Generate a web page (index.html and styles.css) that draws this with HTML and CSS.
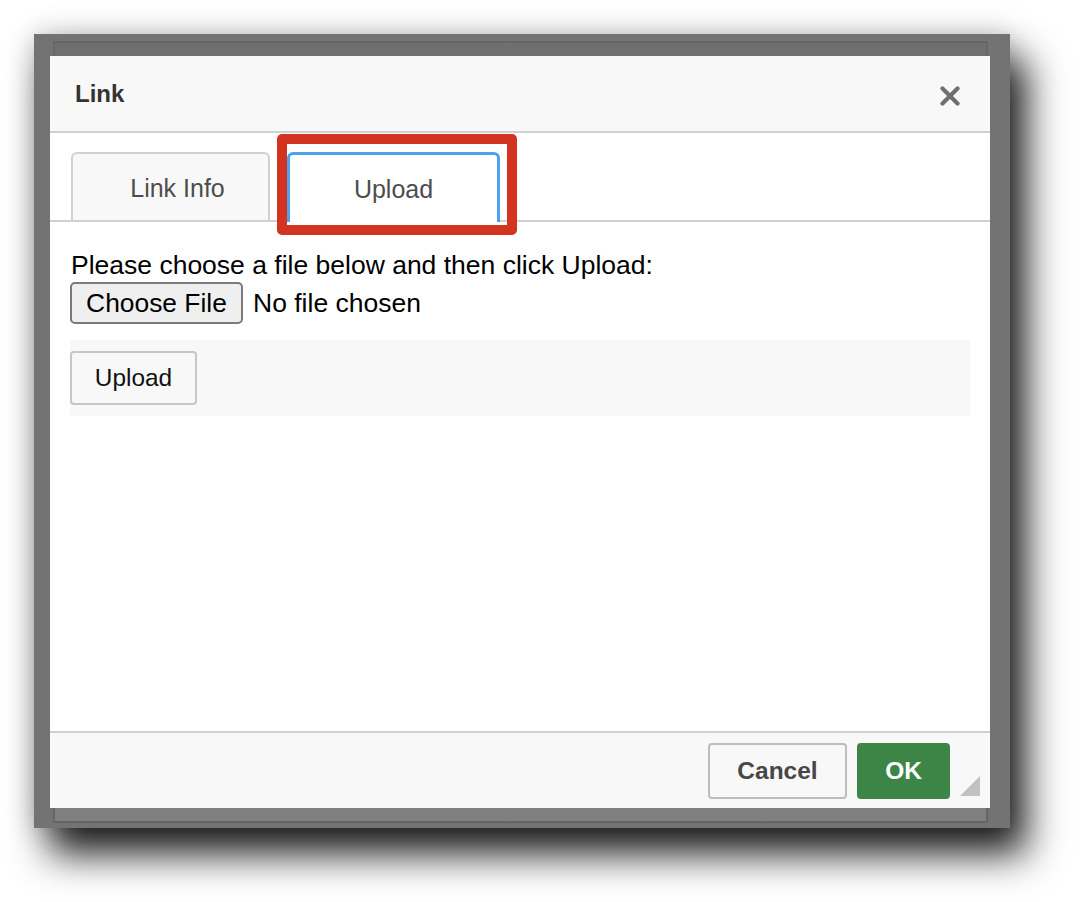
FILE: index.html
```html
<!DOCTYPE html>
<html lang="en">
<head>
<meta charset="utf-8">
<title>Link</title>
<link rel="stylesheet" href="styles.css">
</head>
<body>
<div class="stage">
  <div class="frame">
    <div class="dialog">
      <div class="header">
        <div class="title">Link</div>
        <svg class="close" width="20" height="20" viewBox="0 0 20 20" aria-label="Close">
          <path d="M2.5 2.5 L17.5 17.5 M17.5 2.5 L2.5 17.5" stroke="#6f6f6f" stroke-width="4.2" stroke-linecap="round" fill="none"/>
        </svg>
      </div>
      <div class="body">
        <div class="tabs">
          <div class="tab tab-info">Link Info</div>
          <div class="tab tab-upload active">Upload</div>
        </div>
        <div class="content">
          <div class="prompt">Please choose a file below and then click Upload:</div>
          <div class="file-row">
            <span class="file-btn">Choose File</span>
            <span class="file-name">No file chosen</span>
          </div>
          <div class="panel">
            <span class="upload-btn">Upload</span>
          </div>
        </div>
      </div>
      <div class="footer">
        <span class="btn btn-cancel">Cancel</span>
        <span class="btn btn-ok">OK</span>
        <span class="resize"></span>
      </div>
      <div class="highlight"></div>
    </div>
  </div>
</div>
</body>
</html>
```

FILE: styles.css
```css
html, body {
  margin: 0;
  padding: 0;
  background: #ffffff;
}

body {
  font-family: "Liberation Sans", Arial, sans-serif;
  overflow: hidden;
}

.stage {
  box-sizing: border-box;
  padding: 34px;
  width: 1044px;
  height: 902px;
}

.frame {
  position: relative;
  width: 940px;
  padding: 22px 20px 20px 16px;
  background: #737373;
  box-shadow: 16px 26px 36px rgba(0, 0, 0, 0.88), 0 0 26px rgba(0, 0, 0, 0.22);
}

.frame::before {
  content: "";
  position: absolute;
  left: 19px;
  top: 7px;
  right: 22px;
  bottom: 5px;
  border: 2px solid #666666;
  background: linear-gradient(#6f6f6f, #808080);
}

.dialog {
  position: relative;
  z-index: 1;
  width: 940px;
  height: 752px;
  background: #ffffff;
  display: flex;
  flex-direction: column;
}

.header {
  height: 75px;
  border-bottom: 2px solid #d1d1d1;
  background: #f8f8f8;
  display: flex;
  align-items: center;
  justify-content: space-between;
  padding: 0 30px 0 25px;
}

.title {
  font-size: 24px;
  font-weight: bold;
  color: #333333;
  padding-top: 1px;
}

.close {
  display: block;
  margin-top: 5px;
}

.body {
  flex: 1;
  display: flex;
  flex-direction: column;
}

.tabs {
  display: flex;
  align-items: flex-end;
  gap: 17px;
  padding: 19px 21px 0;
  border-bottom: 2px solid #d1d1d1;
}

.tab {
  box-sizing: border-box;
  height: 68px;
  display: flex;
  align-items: center;
  justify-content: center;
  padding-top: 3px;
  font-size: 25px;
  color: #4d4d4d;
  background: #f8f8f8;
  border: 2px solid #d1d1d1;
  border-bottom: 0;
  border-radius: 6px 6px 0 0;
}

.tab-info {
  width: 199px;
  padding-left: 14px;
}

.tab-upload {
  width: 213px;
}

.tab.active {
  height: 70px;
  margin-bottom: -2px;
  background: #ffffff;
  border: 3px solid #4da2ef;
  border-bottom: 0;
  padding-top: 1px;
}

.content {
  padding: 28px 20px 0;
}

.prompt {
  font-size: 26.5px;
  line-height: 30px;
  color: #000000;
  padding-left: 1px;
}

.file-row {
  display: flex;
  align-items: center;
  gap: 10px;
  margin-top: 2px;
}

.file-btn {
  box-sizing: border-box;
  height: 42px;
  width: 173px;
  display: flex;
  align-items: center;
  justify-content: center;
  font-size: 26.4px;
  color: #000000;
  background: #efefef;
  border: 2px solid #7a7a7a;
  border-radius: 5px;
}

.file-name {
  font-size: 26.5px;
  color: #000000;
}

.panel {
  margin-top: 16px;
  padding: 11px 0;
  background: #f8f8f8;
}

.upload-btn {
  box-sizing: border-box;
  width: 127px;
  height: 54px;
  display: flex;
  align-items: center;
  justify-content: center;
  font-size: 24.4px;
  color: #111111;
  background: #f8f8f8;
  border: 2px solid #c6c6c6;
  border-radius: 4px;
}

.footer {
  position: relative;
  height: 75px;
  border-top: 2px solid #d1d1d1;
  background: #f8f8f8;
  display: flex;
  align-items: center;
  justify-content: flex-end;
  gap: 10px;
  padding-right: 40px;
}

.btn {
  box-sizing: border-box;
  height: 56px;
  display: flex;
  align-items: center;
  justify-content: center;
  font-size: 24.5px;
  font-weight: bold;
  border-radius: 4px;
}

.btn-cancel {
  width: 139px;
  color: #474747;
  background: #f8f8f8;
  border: 2px solid #bdbdbd;
}

.btn-ok {
  width: 93px;
  color: #ffffff;
  background: #3c8547;
  border: 2px solid #3c8547;
}

.resize {
  position: absolute;
  right: 10px;
  bottom: 12px;
  width: 0;
  height: 0;
  border-left: 20px solid transparent;
  border-bottom: 20px solid #c2c2c2;
}

.highlight {
  position: absolute;
  left: 227px;
  top: 78px;
  width: 240px;
  height: 101px;
  box-sizing: border-box;
  border: 10px solid #d3341f;
  border-radius: 5px;
  z-index: 2;
}
```
